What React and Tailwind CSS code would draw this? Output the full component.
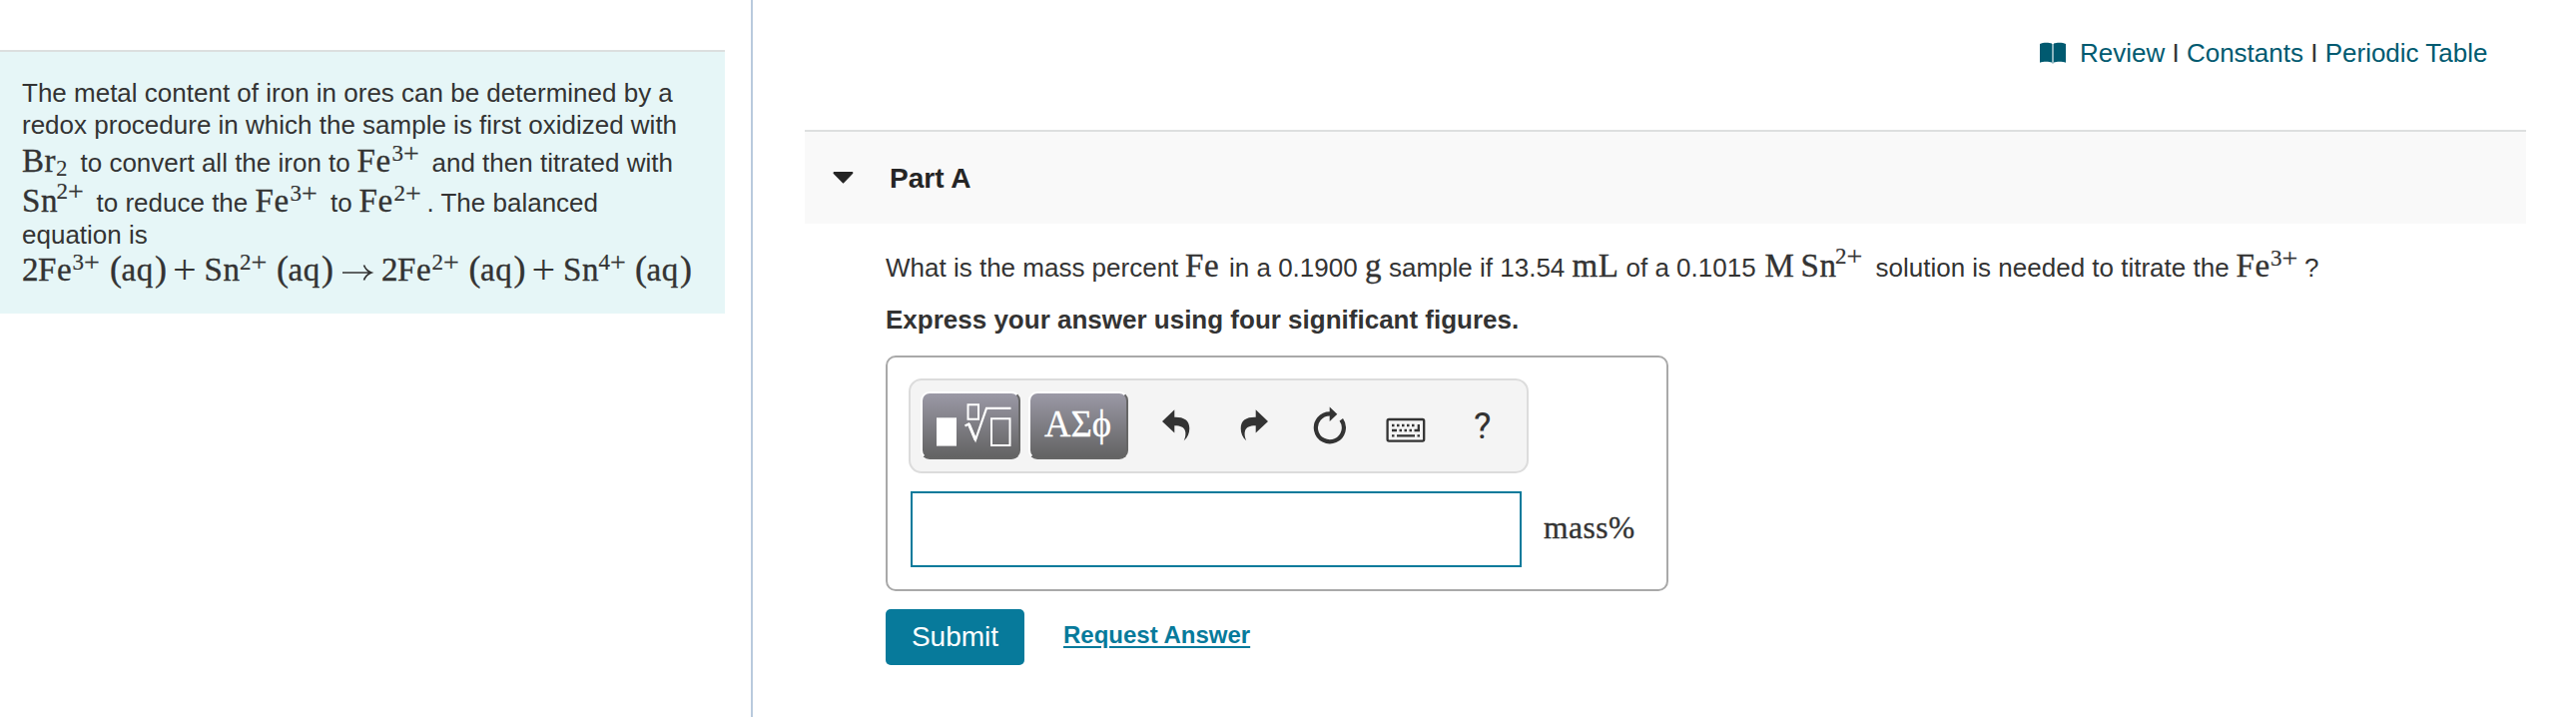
import React from "react";

const Txt = ({ className = "", children }) => (
  <span className={`inline-block whitespace-pre ${className}`}>{children}</span>
);

// Serif run used for chemical symbols and units
const Sym = ({ className = "", size = "text-[33px] tracking-[0.6px]", children }) => (
  <span
    className={`inline-block whitespace-pre font-['Liberation_Serif',serif] leading-[0] [-webkit-text-stroke:0.35px_#333] ${size} ${className}`}
  >
    {children}
  </span>
);

const Sub = ({ className = "", children }) => (
  <span
    className={`inline-block whitespace-pre align-[-4px] font-['Liberation_Serif',serif] text-[23px] leading-[0] ${className}`}
  >
    {children}
  </span>
);

const Charge = ({ n, high = false, className = "" }) => (
  <span
    className={`inline-block whitespace-pre font-['Liberation_Serif',serif] text-[23px] leading-[0] [-webkit-text-stroke:0.2px_#333] ${
      high ? "align-[13.5px]" : "align-[11.5px]"
    } ${className}`}
  >
    {n}
    <span className="text-[28px] align-[-2px]">+</span>
  </span>
);

const Aqueous = ({ className = "w-[18px]" }) => (
  <>
    <Sym size="text-[36px]" className="w-[11.5px]">(</Sym>
    <Sym className="w-[33.5px]">aq</Sym>
    <Sym size="text-[36px]" className={className}>)</Sym>
  </>
);

const Plus = () => (
  <span className="inline-block w-[31.5px] font-['Liberation_Serif',serif] text-[42px] leading-[0] align-[-3px]">+</span>
);

const Arrow = () => (
  <svg width="41" height="18" viewBox="0 0 41 18" fill="none" stroke="#333" strokeWidth="1.7" className="inline-block align-[-1px]">
    <path d="M2 9H30M23.5 1.5Q25.5 7 31 9Q25.5 11 23.5 16.5" />
  </svg>
);

const Problem = () => (
  <section className="mt-[50px] h-[264px] w-[726px] border-t-2 border-[#dcdfdf] bg-[#e6f6f7] pl-[22px] pt-[25px]">
    <div className="h-8 leading-8 whitespace-nowrap">The metal content of iron in ores can be determined by a</div>
    <div className="h-8 leading-8 whitespace-nowrap">redox procedure in which the sample is first oxidized with</div>
    <div className="mt-1.5 h-8 leading-8 whitespace-nowrap">
      <Sym className="w-[34px]">Br</Sym>
      <Sub className="w-[24.5px]">2</Sub>
      <Txt className="w-[277px]">to convert all the iron to</Txt>
      <Sym className="w-[35px]">Fe</Sym>
      <Charge n="3" className="w-[40px]" />
      <Txt>and then titrated with</Txt>
    </div>
    <div className="mt-2 h-8 leading-8 whitespace-nowrap">
      <Sym className="w-[34.5px]">Sn</Sym>
      <Charge n="2" high className="w-[40px]" />
      <Txt className="w-[159px]">to reduce the</Txt>
      <Sym className="w-[35px]">Fe</Sym>
      <Charge n="3" className="w-[40.5px]" />
      <Txt className="w-[28.5px]">to</Txt>
      <Sym className="w-[35px]">Fe</Sym>
      <Charge n="2" className="w-[33px]" />
      <Txt>. The balanced</Txt>
    </div>
    <div className="h-8 leading-8 whitespace-nowrap">equation is</div>
    <div className="mt-[5px] h-8 leading-8 whitespace-nowrap">
      <Sym className="w-[16px]">2</Sym>
      <Sym className="w-[34.5px]">Fe</Sym>
      <Charge n="3" className="w-[37.5px]" />
      <Aqueous />
      <Plus />
      <Sym className="w-[35.5px]">Sn</Sym>
      <Charge n="2" className="w-[37px]" />
      <Aqueous className="w-[19px]" />
      <Arrow />
      <Sym className="w-[16px]">2</Sym>
      <Sym className="w-[34.5px]">Fe</Sym>
      <Charge n="2" className="w-[37px]" />
      <Aqueous />
      <Plus />
      <Sym className="w-[35.5px]">Sn</Sym>
      <Charge n="4" className="w-[36.5px]" />
      <Aqueous />
    </div>
  </section>
);

const BookIcon = () => (
  <svg width="26" height="22" viewBox="0 0 26 22" fill="#005a70">
    <path d="M0 2C3 .3 9 .2 12 1.6V20.5C9 19.4 3 19.4 0 20.8Z" />
    <path d="M14 1.6C17 .2 23 .3 26 2V20.8C23 19.4 17 19.4 14 20.5Z" />
    <path d="M12 2H14V21.5H12Z" opacity=".45" />
  </svg>
);

const TopLinks = () => (
  <nav className="flex h-[130px] items-start pl-[1237px] pt-[37px] leading-8 text-[#005a70]">
    <span className="mt-[5px] mr-[14px]">
      <BookIcon />
    </span>
    <span className="whitespace-pre">
      <a href="#">Review</a>
      <span className="text-[#333]"> I </span>
      <a href="#">Constants</a>
      <span className="text-[#333]"> I </span>
      <a href="#">Periodic Table</a>
    </span>
  </nav>
);

const TemplateIcon = () => (
  <svg width="76" height="44" viewBox="0 0 76 44" fill="none" stroke="#fff">
    <path d="M1 14.3H21V42.6H1Z" fill="#fff" stroke="none" />
    <path d="M32.5 1.3H43V15.7H32.5Z" strokeWidth="2" />
    <path d="M29.5 22.5L33.3 20.5L40 36.5L51 4.8H75.5" strokeWidth="2.2" />
    <path d="M33.3 20.5L40 36.5" strokeWidth="3" />
    <path d="M56 15.2H74.5V42H56Z" strokeWidth="2" />
  </svg>
);

const UndoIcon = ({ className = "" }) => (
  <svg width="28" height="34" viewBox="0 0 28 34" fill="#333" className={className}>
    <path d="M0 13L12.3 1.2V8.8C21 8.5 27.3 11.5 27.3 20C27.3 25 25.5 29 21.8 32.3C23.5 28.5 23.8 25 23 22.5C21.5 18.5 18 17.2 12.3 17.3V24.6Z" />
  </svg>
);

const ResetIcon = () => (
  <svg width="34" height="38" viewBox="0 0 34 38">
    <path d="M28.3 13.2A14 14 0 1 1 17 7.3" fill="none" stroke="#333" strokeWidth="4.2" />
    <path d="M16.7 .6L24.3 7.7L16.7 15Z" fill="#333" />
  </svg>
);

const KeyboardIcon = () => (
  <svg width="40" height="26" viewBox="0 0 40 26" fill="none" stroke="#333">
    <rect x="1.6" y="2" width="36.6" height="21.6" rx="1.5" strokeWidth="2.3" />
    <path d="M6 8H8.5M11 8H13.5M16 8H18.5M21 8H23.5M26 8H28.5" strokeWidth="2.3" />
    <path d="M6 13H11M13.5 13H16M18.5 13H21M23.5 13H26M28.5 13H34M32.8 7V14" strokeWidth="2.3" />
    <path d="M6 18.3H8.5M11 18.3H29M31.5 18.3H34" strokeWidth="2.3" />
  </svg>
);

const toolButton =
  "h-[68px] w-[100px] rounded-[9px] border-2 border-t-white border-l-white border-r-[#666] border-b-[#666] bg-linear-to-b from-[#9b99a6] to-[#636363]";

const Toolbar = () => (
  <div className="flex h-[95px] w-[621px] items-start rounded-[13px] border-2 border-[#dcdcdc] bg-[#f4f4f4] pl-[10px] pt-[11px]">
    <button className={`${toolButton} flex pl-[13px] pt-[10px]`}>
      <TemplateIcon />
    </button>
    <button
      className={`${toolButton} ml-2 pb-1 pl-[14px] text-left font-['Liberation_Serif',serif] text-[37px] leading-[57px] text-white whitespace-nowrap`}
    >
      <span className="inline-block origin-left scale-x-[0.99] [-webkit-text-stroke:0.3px_#fff]">ΑΣϕ</span>
    </button>
    <button className="ml-[34px] mt-[17px]">
      <UndoIcon />
    </button>
    <button className="ml-[50px] mt-[17px]">
      <UndoIcon className="-scale-x-100" />
    </button>
    <button className="ml-[45px] mt-[15px]">
      <ResetIcon />
    </button>
    <button className="ml-[39px] mt-[26px]">
      <KeyboardIcon />
    </button>
    <button className="ml-[48px] mt-[12px] font-[Roboto,sans-serif] text-[37px] leading-[46px]">?</button>
  </div>
);

const AnswerBox = () => (
  <div className="mt-[20px] h-[236px] w-[784px] rounded-[10px] border-2 border-[#a9a9a9] pl-[21px] pt-[21px]">
    <Toolbar />
    <div className="mt-[18px] flex pl-[2px]">
      <input className="h-[76px] w-[612px] border-2 border-[#077a9b] bg-white outline-none" />
      <span className="ml-[22px] mt-[19px] font-['Liberation_Serif',serif] text-[31.5px] leading-[36px] tracking-[0.5px] [-webkit-text-stroke:0.35px_#333]">
        mass%
      </span>
    </div>
  </div>
);

const PartA = () => (
  <section className="w-[1724px]">
    <header className="flex h-[94px] items-center border-t-2 border-[#dddfdf] bg-[#f9f9f9] pl-[28px] text-[28px] font-bold text-[#252525]">
      <svg width="21" height="12" viewBox="0 0 21 12" fill="#252525" className="mr-[36px]">
        <path d="M1.3 0H19.7Q21 .8 20.2 1.8L11.3 11Q10.5 12 9.7 11L.6 1.8Q0 .8 1.3 0Z" />
      </svg>
      <h2 className="mt-px">Part A</h2>
    </header>
    <div className="pl-[81px]">
      <p className="mt-[28px] h-8 leading-8 whitespace-nowrap">
        <Txt className="w-[300px]">What is the mass percent</Txt>
        <Sym className="w-[44px]">Fe</Sym>
        <Txt className="w-[136px]">in a 0.1900</Txt>
        <Sym className="w-[24px]">g</Sym>
        <Txt className="w-[183.5px]">sample if 13.54</Txt>
        <Sym className="w-[54px]">mL</Sym>
        <Txt className="w-[139px]">of a 0.1015</Txt>
        <Sym className="w-[36px]">M</Sym>
        <Sym className="w-[34.5px]">Sn</Sym>
        <Charge n="2" high className="w-[40.5px]" />
        <Txt className="w-[361px]">solution is needed to titrate the</Txt>
        <Sym className="w-[34.5px]">Fe</Sym>
        <Charge n="3" className="w-[34px]" />
        <Txt>?</Txt>
      </p>
      <p className="mt-5 h-8 leading-8 font-bold">Express your answer using four significant figures.</p>
      <AnswerBox />
      <div className="mt-[18px] flex">
        <button className="h-[56px] w-[139px] rounded-[5px] bg-[#077a9b] text-[28px] text-white">Submit</button>
        <a
          href="#"
          className="ml-[39px] mt-[10px] text-[24px] leading-8 font-bold text-[#077a9b] underline decoration-2 underline-offset-[3px]"
        >
          Request Answer
        </a>
      </div>
    </div>
  </section>
);

const App = () => (
  <div className="flex h-[718px] w-[2580px] overflow-hidden bg-white font-['Liberation_Sans',Arial,sans-serif] text-[26px] text-[#333]">
    <aside className="w-[752px] shrink-0">
      <Problem />
    </aside>
    <main className="grow border-l-2 border-[#b9cadd] pl-[52px]">
      <TopLinks />
      <PartA />
    </main>
  </div>
);

export default App;
